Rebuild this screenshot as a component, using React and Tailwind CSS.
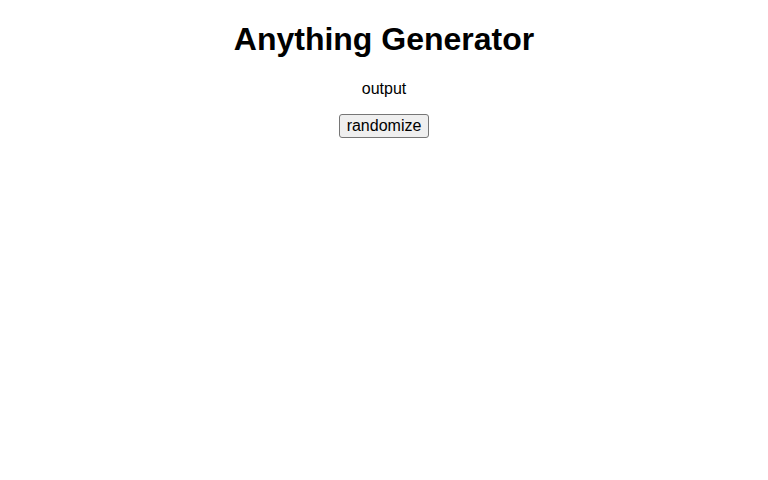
export default function App() {
  return (
    <div className="min-h-screen bg-white text-center text-black font-['Liberation_Sans',Arial,sans-serif]">
      <div className="pt-[21.44px]">
        <h1 className="text-[32px] leading-[36.8px] font-bold">Anything Generator</h1>
        <p className="mt-[21.44px] text-[16px] leading-[18.4px]">output</p>
        <div className="mt-4">
          <button
            type="button"
            className="text-[16px] leading-[18.4px] px-[7px] py-[2px] border border-solid border-[#767676] bg-[#efefef] rounded-[3px] hover:bg-[#e5e5e5]"
          >
            randomize
          </button>
        </div>
      </div>
    </div>
  );
}
